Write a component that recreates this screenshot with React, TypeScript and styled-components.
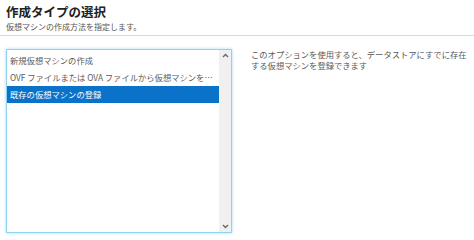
import React from 'react';
import styled, { createGlobalStyle } from 'styled-components';

const GlobalStyle = createGlobalStyle`
  html, body {
    margin: 0;
    padding: 0;
    background: #fff;
  }
  body {
    font-family: "Noto Sans CJK JP", "Liberation Sans", sans-serif;
  }
`;

const Page = styled.div`
  width: 474px;
  height: 236px;
  overflow: hidden;
`;

const Header = styled.div`
  padding: 3px 0 0 6px;
  height: 36px;
  box-sizing: border-box;
  border-bottom: 1px solid #d9d9d9;
`;

const Title = styled.h1`
  margin: 0;
  font-size: 12.5px;
  line-height: 18px;
  font-weight: 700;
  color: #222;
`;

const Subtitle = styled.div`
  font-size: 8px;
  line-height: 12px;
  color: #555;
`;

const Body = styled.div`
  display: flex;
  padding: 13px 0 0 6px;
`;

const ListBox = styled.div`
  width: 226px;
  height: 184px;
  box-sizing: border-box;
  border: 1px solid #8fd3ee;
  box-shadow: 0 0 3px rgba(90, 190, 235, 0.55);
  display: flex;
  background: #fff;
`;

const Items = styled.div`
  flex: 1;
  padding-top: 2px;
  min-width: 0;
`;

const Item = styled.div<{ $selected?: boolean }>`
  height: 17px;
  line-height: 17px;
  padding-left: 3px;
  font-size: 8.3px;
  white-space: nowrap;
  overflow: hidden;
  text-overflow: ellipsis;
  color: ${(p) => (p.$selected ? '#fff' : '#5a5a5a')};
  background: ${(p) => (p.$selected ? '#0a72c9' : 'transparent')};
`;

const ScrollBar = styled.div`
  width: 12px;
  background: #f0f0f0;
  display: flex;
  flex-direction: column;
  justify-content: space-between;
  align-items: center;
  padding: 3px 0;
  box-sizing: border-box;
`;

const Arrow = styled.svg`
  width: 7px;
  height: 5px;
  display: block;
`;

const Description = styled.div`
  margin-left: 19px;
  width: 220px;
  font-size: 8.3px;
  line-height: 11px;
  color: #5a5a5a;
`;

export default function App() {
  return (
    <Page>
      <GlobalStyle />
      <Header>
        <Title>作成タイプの選択</Title>
        <Subtitle>仮想マシンの作成方法を指定します。</Subtitle>
      </Header>
      <Body>
        <ListBox>
          <Items>
            <Item>新規仮想マシンの作成</Item>
            <Item>OVF ファイルまたは OVA ファイルから仮想マシンをデプロイ</Item>
            <Item $selected>既存の仮想マシンの登録</Item>
          </Items>
          <ScrollBar>
            <Arrow viewBox="0 0 7 5">
              <path d="M1 4 L3.5 1.5 L6 4" fill="none" stroke="#666" strokeWidth="1.4" />
            </Arrow>
            <Arrow viewBox="0 0 7 5">
              <path d="M1 1 L3.5 3.5 L6 1" fill="none" stroke="#666" strokeWidth="1.4" />
            </Arrow>
          </ScrollBar>
        </ListBox>
        <Description>
          このオプションを使用すると、データストアにすでに存在する仮想マシンを登録できます
        </Description>
      </Body>
    </Page>
  );
}
